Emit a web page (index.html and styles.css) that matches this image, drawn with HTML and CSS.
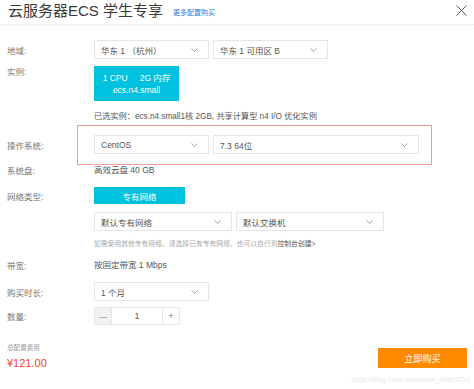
FILE: index.html
```html
<!DOCTYPE html>
<html lang="zh-CN">
<head>
<meta charset="utf-8">
<title>云服务器ECS 学生专享</title>
<link rel="stylesheet" href="styles.css">
</head>
<body>
<header class="head">
  <h1 class="title">云服务器ECS 学生专享</h1>
  <a class="more" href="#">更多配置购买</a>
  <svg class="close" width="11" height="11" viewBox="0 0 11 11"><path d="M0.5 0.5 L10.5 10.5 M10.5 0.5 L0.5 10.5" stroke="#555" stroke-width="1" fill="none"/></svg>
</header>
<main class="form">
  <div class="row r-region">
    <span class="label">地域:</span>
    <div class="select w114"><span>华东 1 （杭州）</span><svg class="chev" width="7" height="4" viewBox="0 0 7 4"><polyline points="0.5,0.5 3.5,3.5 6.5,0.5" fill="none" stroke="#999" stroke-width="0.9"/></svg></div>
    <div class="select w114"><span>华东 1 可用区 B</span><svg class="chev" width="7" height="4" viewBox="0 0 7 4"><polyline points="0.5,0.5 3.5,3.5 6.5,0.5" fill="none" stroke="#999" stroke-width="0.9"/></svg></div>
  </div>
  <div class="row r-inst top">
    <span class="label lt">实例:</span>
    <div class="inst">
      <div class="inst-spec"><span>1 CPU</span><span>2G 内存</span></div>
      <div class="inst-name">ecs.n4.small</div>
    </div>
  </div>
  <div class="row r-chosen">
    <span class="label"></span>
    <span class="text sm">已选实例：ecs.n4.small1核 2GB, 共享计算型 n4 I/O 优化实例</span>
  </div>
  <div class="row r-os">
    <span class="label">操作系统:</span>
    <div class="select w114"><span>CentOS</span><svg class="chev" width="7" height="4" viewBox="0 0 7 4"><polyline points="0.5,0.5 3.5,3.5 6.5,0.5" fill="none" stroke="#999" stroke-width="0.9"/></svg></div>
    <div class="select w206"><span>7.3 64位</span><svg class="chev" width="7" height="4" viewBox="0 0 7 4"><polyline points="0.5,0.5 3.5,3.5 6.5,0.5" fill="none" stroke="#999" stroke-width="0.9"/></svg></div>
    <div class="mark"></div>
  </div>
  <div class="row r-disk">
    <span class="label">系统盘:</span>
    <span class="text">高效云盘 40 GB</span>
  </div>
  <div class="row r-net">
    <span class="label">网络类型:</span>
    <div class="btn-net">专有网络</div>
  </div>
  <div class="row r-vpc">
    <span class="label"></span>
    <div class="select w137"><span>默认专有网络</span><svg class="chev" width="7" height="4" viewBox="0 0 7 4"><polyline points="0.5,0.5 3.5,3.5 6.5,0.5" fill="none" stroke="#999" stroke-width="0.9"/></svg></div>
    <div class="select w148"><span>默认交换机</span><svg class="chev" width="7" height="4" viewBox="0 0 7 4"><polyline points="0.5,0.5 3.5,3.5 6.5,0.5" fill="none" stroke="#999" stroke-width="0.9"/></svg></div>
  </div>
  <div class="row r-hint">
    <span class="label"></span>
    <span class="hint">如需使用其他专有网络，请选择已有专有网络，也可以自行到<b>控制台创建&gt;</b></span>
  </div>
  <div class="row r-bw">
    <span class="label">带宽:</span>
    <span class="text">按固定带宽 1 Mbps</span>
  </div>
  <div class="row r-dur">
    <span class="label">购买时长:</span>
    <div class="select w114"><span>1 个月</span><svg class="chev" width="7" height="4" viewBox="0 0 7 4"><polyline points="0.5,0.5 3.5,3.5 6.5,0.5" fill="none" stroke="#999" stroke-width="0.9"/></svg></div>
  </div>
  <div class="row r-qty">
    <span class="label">数量:</span>
    <div class="stepper">
      <span class="step minus">—</span>
      <span class="val">1</span>
      <span class="step plus">+</span>
    </div>
  </div>
</main>
<footer class="foot">
  <div class="fee">
    <div class="fee-label">总配置费用</div>
    <div class="fee-price">¥121.00</div>
  </div>
  <a class="buy" href="#">立即购买</a>
</footer>
<div class="wm">https://blog.csdn.net/weixin_40604114</div>
</body>
</html>
```
FILE: styles.css
```css
* { box-sizing: border-box; }
html, body { margin: 0; padding: 0; background: #fff; }
body {
  width: 474px;
  height: 389px;
  overflow: hidden;
  font-family: "Liberation Sans", "Noto Sans CJK SC", sans-serif;
  color: #333;
}
.head {
  height: 25px;
  display: flex;
  align-items: center;
  padding: 0 7px 2px 8px;
  border-bottom: 1px solid #eee;
  box-shadow: 0 1px 2px rgba(0,0,0,0.04);
}
.title {
  margin: 0;
  font-size: 15px;
  font-weight: normal;
  color: #3a3a3a;
  line-height: 20px;
}
.more {
  margin-left: 10px;
  margin-top: 2px;
  font-size: 7px;
  color: #2c7be5;
  text-decoration: none;
}
.close { margin-left: auto; margin-right: 0; margin-top: -2px; }
.form { padding-left: 7px; }
.row {
  display: flex;
  align-items: center;
  gap: 4px;
}
.row.top { align-items: flex-start; }
.label {
  width: 83px;
  flex: none;
  font-size: 8.5px;
  color: #777;
}
.label.lt { padding-top: 1px; line-height: 10px; }
.text { font-size: 8.5px; color: #555; line-height: 12px; }
.text.sm { font-size: 8.2px; }
.select {
  height: 19px;
  border: 1px solid #e6e6e6;
  display: flex;
  align-items: center;
  justify-content: space-between;
  padding: 0 10px 0 6px;
  font-size: 8.5px;
  color: #555;
  background: #fff;
}
.chev { flex: none; }
.w114 { width: 115px; }
.w206 { width: 206px; }
.w137 { width: 138px; }
.w148 { width: 148px; }
.r-region { margin-top: 15px; }
.r-inst { margin-top: 7px; }
.inst {
  width: 85px;
  height: 35px;
  background: #00c1de;
  color: #fff;
  display: flex;
  flex-direction: column;
  align-items: center;
  justify-content: center;
  font-size: 8.5px;
  line-height: 12px;
}
.inst-spec { display: flex; gap: 12px; }
.r-chosen { margin-top: 10px; }
.r-os { margin-top: 12px; position: relative; }
.mark {
  position: absolute;
  left: 70px;
  top: -10px;
  width: 355px;
  height: 40px;
  border: 1px solid #f09c9c;
  pointer-events: none;
}
.r-disk { margin-top: 10px; }
.r-net { margin-top: 11px; }
.btn-net {
  width: 91px;
  height: 17px;
  background: #00c1de;
  color: #fff;
  font-size: 8.5px;
  display: flex;
  align-items: center;
  justify-content: center;
}
.r-vpc { margin-top: 8px; }
.r-hint { margin-top: 8px; }
.hint { font-size: 6.8px; color: #aaa; line-height: 10px; }
.hint b { font-weight: normal; color: #555; }
.r-bw { margin-top: 10px; }
.r-dur { margin-top: 11px; }
.r-qty { margin-top: 6px; }
.stepper {
  width: 86px;
  height: 18px;
  border: 1px solid #e6e6e6;
  display: flex;
  font-size: 9px;
  color: #555;
}
.step {
  width: 17px;
  display: flex;
  align-items: center;
  justify-content: center;
  color: #777;
}
.minus { background: #f2f2f2; border-right: 1px solid #e6e6e6; font-size: 8px; }
.plus { border-left: 1px solid #e6e6e6; }
.val { flex: 1; display: flex; align-items: center; justify-content: center; }
.foot {
  display: flex;
  justify-content: space-between;
  align-items: flex-start;
  padding: 0 7px;
  margin-top: 18px;
}
.fee-label { font-size: 6.6px; color: #999; line-height: 10px; }
.fee-price { margin-top: 3px; font-size: 11px; color: #f04a24; line-height: 14px; }
.buy {
  margin-top: 5px;
  width: 89px;
  height: 20px;
  background: #ff8a00;
  color: #fff;
  font-size: 9px;
  text-decoration: none;
  display: flex;
  align-items: center;
  justify-content: center;
}
.wm {
  margin-top: 5px;
  text-align: right;
  padding-right: 4px;
  font-size: 7px;
  line-height: 10px;
  color: #e9e9e9;
}
```
